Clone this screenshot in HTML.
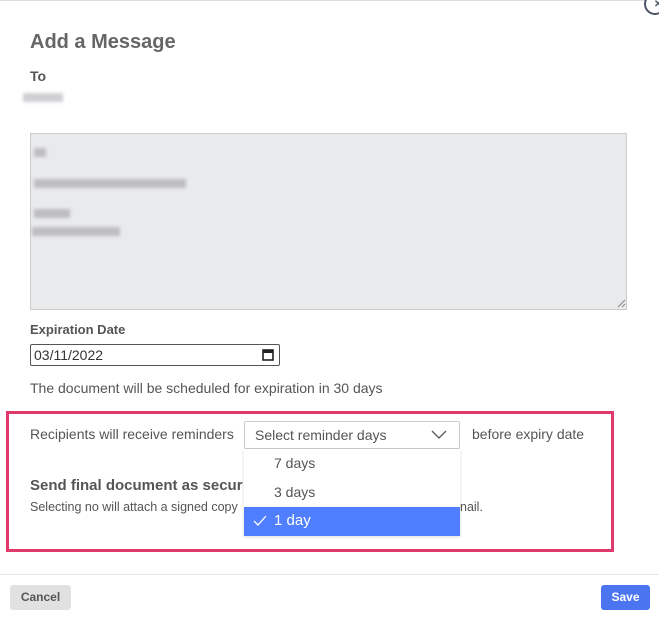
<!DOCTYPE html>
<html><head><style>
*{box-sizing:border-box;margin:0;padding:0}
body{width:659px;height:619px;background:#fff;font-family:"Liberation Sans",sans-serif;position:relative;overflow:hidden;color:#505050}
.a{position:absolute}
.blur{position:absolute;background:#bdbdc2;filter:blur(1.5px);height:9px}
</style></head><body>
<div class="a" style="left:0;top:0;width:659px;height:1px;background:#ddd"></div>
<div class="a" style="left:644px;top:-7px;width:22px;height:22px;border-radius:50%;border:2px solid #4b5563;background:#fff"></div>
<div class="a" style="left:654px;top:-1px;font-size:10px;font-weight:bold;color:#4b5563">✕</div>
<div class="a" style="left:30px;top:31px;font-size:20px;font-weight:bold;color:#666">Add a Message</div>
<div class="a" style="left:30px;top:68px;font-size:14px;font-weight:bold;color:#555">To</div>
<div class="blur" style="left:23px;top:93px;width:40px;background:#d0d0d4"></div>
<div class="a" style="left:30px;top:133px;width:597px;height:177px;background:#e9eaec;border:1px solid #ccc"></div>
<div class="blur" style="left:34px;top:148px;width:12px"></div>
<div class="blur" style="left:34px;top:179px;width:152px"></div>
<div class="blur" style="left:34px;top:209px;width:36px"></div>
<div class="blur" style="left:32px;top:227px;width:88px"></div>
<svg class="a" style="left:617px;top:299px" width="9" height="9"><path d="M1 8L8 1M5 8L8 5" stroke="#888" stroke-width="1"/></svg>
<div class="a" style="left:30px;top:322px;font-size:13px;font-weight:bold;color:#555">Expiration Date</div>
<div class="a" style="left:30px;top:344px;width:250px;height:22px;border:1px solid #555;border-radius:2px;font-size:14px;color:#333;padding:2px 0 0 3px">03/11/2022</div>
<svg class="a" style="left:262px;top:348px" width="12" height="14"><rect x="1" y="2" width="10" height="10" fill="none" stroke="#222" stroke-width="1.6"/><rect x="1" y="2" width="10" height="3" fill="#222"/></svg>
<div class="a" style="left:30px;top:380px;font-size:14px;color:#555">The document will be scheduled for expiration in 30 days</div>
<div class="a" style="left:6px;top:411px;width:608px;height:141px;border:3px solid #e03a6c"></div>
<div class="a" style="left:30px;top:426px;font-size:14px;color:#555">Recipients will receive reminders</div>
<div class="a" style="left:244px;top:421px;width:216px;height:28px;border:1px solid #ccc;border-radius:2px;font-size:14px;color:#555;padding:5px 0 0 10px">Select reminder days</div>
<svg class="a" style="left:431px;top:430px" width="16" height="10"><path d="M1 1L8 8L15 1" fill="none" stroke="#555" stroke-width="1.3"/></svg>
<div class="a" style="left:472px;top:426px;font-size:14px;color:#555">before expiry date</div>
<div class="a" style="left:30px;top:477px;font-size:15px;font-weight:bold;color:#555">Send final document as secur</div>
<div class="a" style="left:30px;top:500px;font-size:12.5px;color:#555">Selecting no will attach a signed copy</div>
<div class="a" style="left:460px;top:500px;font-size:12.5px;color:#555">nail.</div>
<div class="a" style="left:244px;top:449px;width:216px;height:87px;background:#fff;box-shadow:0 1px 3px rgba(0,0,0,.15)"></div>
<div class="a" style="left:274px;top:455px;font-size:14px;color:#555">7 days</div>
<div class="a" style="left:274px;top:484px;font-size:14px;color:#555">3 days</div>
<div class="a" style="left:244px;top:507px;width:216px;height:29px;background:#4f7ffe"></div>
<svg class="a" style="left:253px;top:515px" width="14" height="12"><path d="M1 6L5 10L13 1" fill="none" stroke="#fff" stroke-width="1.3"/></svg>
<div class="a" style="left:274px;top:512px;font-size:15px;color:#fff">1 day</div>
<div class="a" style="left:0;top:574px;width:659px;height:1px;background:#e5e5e5"></div>
<div class="a" style="left:10px;top:585px;width:61px;height:25px;background:#e1e1e1;border-radius:3px;font-size:12px;font-weight:bold;color:#555;text-align:center;line-height:25px">Cancel</div>
<div class="a" style="left:601px;top:585px;width:49px;height:25px;background:#4b74f0;border-radius:3px;font-size:12px;font-weight:bold;color:#fff;text-align:center;line-height:25px">Save</div>
</body></html>
